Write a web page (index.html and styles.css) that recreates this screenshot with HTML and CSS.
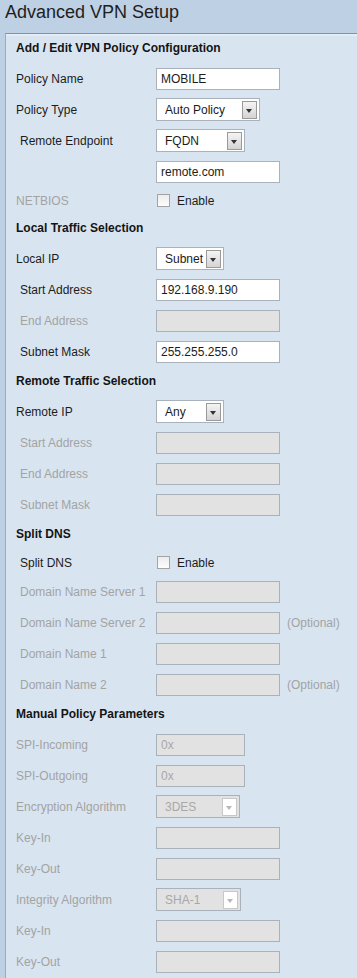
FILE: index.html
```html
<!DOCTYPE html>
<html lang="en">
<head>
  <meta charset="UTF-8" />
  <meta name="viewport" content="width=device-width, initial-scale=1.0" />
  <title>Advanced VPN Setup</title>
  <link rel="stylesheet" href="styles.css">
</head>
<body>
  <div class="page-title">Advanced VPN Setup</div>
  <div class="panel">
    <div class="section">Add / Edit VPN Policy Configuration</div>
    <div class="row">
      <label class="label">Policy Name</label>
      <div class="field">MOBILE</div>
    </div>
    <div class="row">
      <label class="label">Policy Type</label>
      <div class="select w104"><span>Auto Policy</span><i class="arrow"></i></div>
    </div>
    <div class="row">
      <label class="label sub">Remote Endpoint</label>
      <div class="select w89"><span>FQDN</span><i class="arrow"></i></div>
    </div>
    <div class="row">
      <label class="label"></label>
      <div class="field">remote.com</div>
    </div>
    <div class="row check">
      <label class="label off">NETBIOS</label>
      <span class="box"></span><span class="box-text">Enable</span>
    </div>

    <div class="section">Local Traffic Selection</div>
    <div class="row">
      <label class="label">Local IP</label>
      <div class="select w68"><span>Subnet</span><i class="arrow"></i></div>
    </div>
    <div class="row">
      <label class="label sub">Start Address</label>
      <div class="field">192.168.9.190</div>
    </div>
    <div class="row">
      <label class="label sub off">End Address</label>
      <div class="field disabled"></div>
    </div>
    <div class="row">
      <label class="label sub">Subnet Mask</label>
      <div class="field">255.255.255.0</div>
    </div>

    <div class="section">Remote Traffic Selection</div>
    <div class="row">
      <label class="label">Remote IP</label>
      <div class="select w68"><span>Any</span><i class="arrow"></i></div>
    </div>
    <div class="row">
      <label class="label sub off">Start Address</label>
      <div class="field disabled"></div>
    </div>
    <div class="row">
      <label class="label sub off">End Address</label>
      <div class="field disabled"></div>
    </div>
    <div class="row">
      <label class="label sub off">Subnet Mask</label>
      <div class="field disabled"></div>
    </div>

    <div class="section">Split DNS</div>
    <div class="row check">
      <label class="label sub">Split DNS</label>
      <span class="box"></span><span class="box-text">Enable</span>
    </div>
    <div class="row">
      <label class="label sub off">Domain Name Server 1</label>
      <div class="field disabled"></div>
    </div>
    <div class="row">
      <label class="label sub off">Domain Name Server 2</label>
      <div class="field disabled"></div>
      <span class="hint">(Optional)</span>
    </div>
    <div class="row">
      <label class="label sub off">Domain Name 1</label>
      <div class="field disabled"></div>
    </div>
    <div class="row">
      <label class="label sub off">Domain Name 2</label>
      <div class="field disabled"></div>
      <span class="hint">(Optional)</span>
    </div>

    <div class="section">Manual Policy Parameters</div>
    <div class="row">
      <label class="label off">SPI-Incoming</label>
      <div class="field disabled short">0x</div>
    </div>
    <div class="row">
      <label class="label off">SPI-Outgoing</label>
      <div class="field disabled short">0x</div>
    </div>
    <div class="row">
      <label class="label off">Encryption Algorithm</label>
      <div class="select disabled w84"><span>3DES</span><i class="arrow"></i></div>
    </div>
    <div class="row">
      <label class="label off">Key-In</label>
      <div class="field disabled"></div>
    </div>
    <div class="row">
      <label class="label off">Key-Out</label>
      <div class="field disabled"></div>
    </div>
    <div class="row">
      <label class="label off">Integrity Algorithm</label>
      <div class="select disabled w85"><span>SHA-1</span><i class="arrow"></i></div>
    </div>
    <div class="row">
      <label class="label off">Key-In</label>
      <div class="field disabled"></div>
    </div>
    <div class="row">
      <label class="label off">Key-Out</label>
      <div class="field disabled"></div>
    </div>
  </div>
</body>
</html>
```

FILE: styles.css
```css
body {
  margin: 0;
  padding: 0;
  font-family: 'Liberation Sans', Arial, sans-serif;
  font-size: 12px;
  color: #1c1c1c;
  background: #bed0e3;
}
.page-title {
  height: 33px;
  padding-left: 5px;
  font-size: 18px;
  line-height: 25px;
  color: #1e1e1e;
  box-sizing: border-box;
}
.panel {
  margin-left: 5px;
  padding-left: 10px;
  background: #d8e5f1;
  border-top: 1px solid #8294a8;
  border-left: 1px solid #9aabbd;
  box-shadow: inset 0 2px 0 #e4edf6;
  min-height: 960px;
}
.section {
  height: 29px;
  line-height: 29px;
  font-weight: bold;
  color: #141414;
}
.row {
  height: 31px;
  display: flex;
  align-items: center;
}
.row.check {
  height: 27px;
}
.label {
  width: 140px;
  flex: none;
}
.label.sub {
  width: 136px;
  padding-left: 4px;
}
.label.off {
  color: #a3a3a3;
}
.field {
  width: 124px;
  height: 22px;
  box-sizing: border-box;
  border: 1px solid #a9b1ba;
  background: #fff;
  padding-left: 4px;
  line-height: 20px;
  color: #1c1c1c;
}
.field.disabled {
  background: #e2e2e2;
  color: #a8a8a8;
}
.field.short {
  width: 89px;
}
.hint {
  margin-left: 7px;
  color: #a3a3a3;
}
.select {
  height: 23px;
  box-sizing: border-box;
  border: 1px solid #a9b1ba;
  background: #fff;
  display: flex;
  align-items: center;
  padding: 0 2px 0 8px;
}
.select span {
  flex: 1;
}
.select.disabled {
  background: #e2e2e2;
  color: #a8a8a8;
}
.w104 { width: 104px; }
.w89 { width: 89px; }
.w68 { width: 68px; }
.w84 { width: 84px; }
.w85 { width: 85px; }
.arrow {
  width: 15px;
  height: 18px;
  box-sizing: border-box;
  border: 1px solid #9a9a9a;
  background: linear-gradient(#f4f4f4, #d4d4d4);
  position: relative;
}
.arrow::after {
  content: "";
  position: absolute;
  left: 3px;
  top: 7px;
  border-left: 3.5px solid transparent;
  border-right: 3.5px solid transparent;
  border-top: 4px solid #333;
}
.select.disabled .arrow {
  border-color: #c8c8c8;
  background: #fff;
}
.select.disabled .arrow::after {
  border-top-color: #b8b8b8;
}
.box {
  width: 13px;
  height: 13px;
  margin-left: 1px;
  box-sizing: border-box;
  border: 1px solid #a4a4a4;
  background: linear-gradient(#ececec, #fdfdfd);
}
.box-text {
  margin-left: 7px;
}
```
